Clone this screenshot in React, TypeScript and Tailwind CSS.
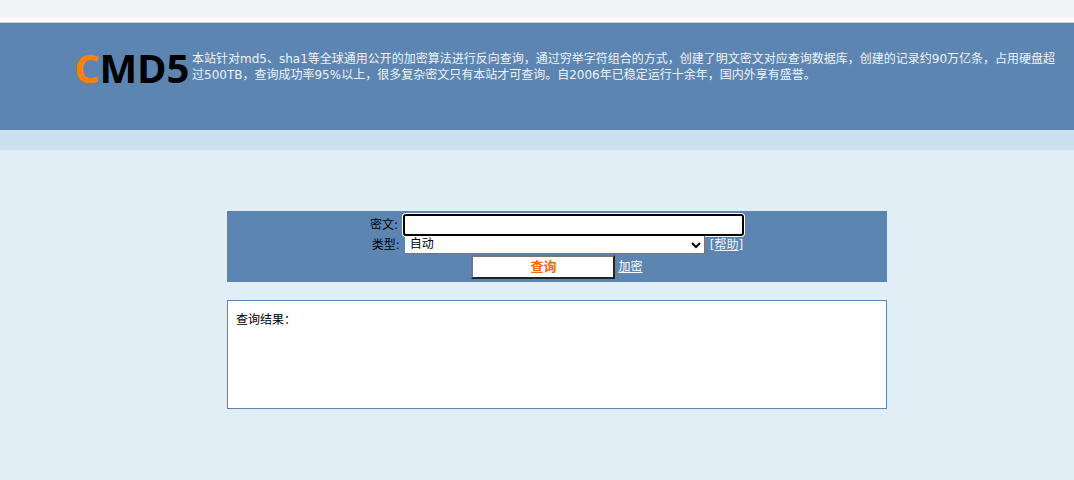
export default function App() {
  return (
    <div className="flex h-[480px] w-full flex-col overflow-hidden bg-[#e1eef6] text-[12px] leading-4 text-black [font-family:'DejaVu_Sans','Noto_Sans_CJK_SC',sans-serif]">
      <div className="h-[18px] bg-[#f1f3f5]" />
      <div className="h-[5px] border-b border-[#cfd2d6] bg-white" />

      <header className="flex h-[107px] bg-[#5c86b1] pl-[74px] pr-[18px] pt-[28px]">
        <div className="flex h-[34px] w-[118px] shrink-0 items-center text-[40px] font-bold leading-none tracking-[-0.1px] [font-family:'Open_Sans',sans-serif]">
          <span className="text-[#ff8000]">C</span>
          <span className="text-black">MD5</span>
        </div>
        <p className="text-[12px] leading-4 text-[#eef3f8]">
          本站针对md5、sha1等全球通用公开的加密算法进行反向查询，通过穷举字符组合的方式，创建了明文密文对应查询数据库，创建的记录约90万亿条，占用硬盘超过500TB，查询成功率95%以上，很多复杂密文只有本站才可查询。自2006年已稳定运行十余年，国内外享有盛誉。
        </p>
      </header>
      <div className="h-5 bg-[#cbe0ef]" />

      <main className="ml-[227px] mt-[61px] flex w-[660px] flex-col gap-[18px]">
        <form className="flex h-[71px] flex-col items-center bg-[#5c86b1] pt-[3px]">
          <div className="flex h-[22px] items-center">
            <label className="mr-[5px]">密文:</label>
            <input
              autoFocus
              className="h-[22px] w-[341px] rounded-[3px] border-2 border-black bg-white shadow-[0_0_0_1px_#fff] outline-none"
            />
          </div>
          <div className="-mt-[1px] flex h-[19px] items-center pl-[1px]">
            <label className="mr-[5px]">类型:</label>
            <select className="h-[18px] w-[300px] border border-[#767676] border-t-0 border-l-0 bg-white pl-[1px] text-[12px] leading-4 text-black">
              <option>自动</option>
            </select>
            <span className="ml-[5px] text-[#eef3f8]">
              [<a className="underline">帮助</a>]
            </span>
          </div>
          <div className="mt-[1px] flex h-[24px] items-center">
            <button
              type="button"
              className="h-[24px] w-[144px] border-2 border-t-[#767676] border-l-[#767676] border-r-[#222222] border-b-[#222222] bg-white text-[13px] font-bold text-[#ff6600]"
            >
              查询
            </button>
            <a className="ml-[3px] text-white underline">加密</a>
          </div>
        </form>

        <section className="h-[109px] border border-[#5c86b1] bg-white px-2 py-[11px]">
          查询结果：
        </section>
      </main>
    </div>
  )
}
